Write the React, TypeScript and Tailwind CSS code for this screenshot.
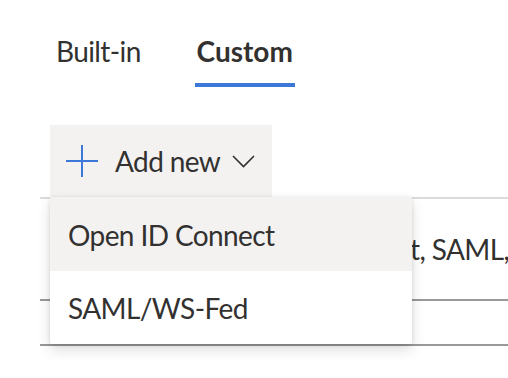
import React from "react";

const PlusIcon = () => (
  <svg width="32" height="32" viewBox="0 0 32 32" className="shrink-0">
    <path d="M0 16H32M16 0V32" stroke="#3b78d8" strokeWidth="2" fill="none" />
  </svg>
);

const ChevronIcon = () => (
  <svg width="23" height="13" viewBox="0 0 23 13" className="shrink-0">
    <polyline
      points="1,1 11.5,11.5 22,1"
      stroke="#323130"
      strokeWidth="1.6"
      fill="none"
    />
  </svg>
);

const menuItems = ["Open ID Connect", "SAML/WS-Fed"];

const App: React.FC = () => {
  return (
    <div
      className="w-[508px] h-[378px] bg-white overflow-hidden flex flex-col text-[#323130] text-[28px] leading-[40px] tracking-[-0.6px]"
      style={{ fontFamily: 'Lato, "Open Sans", sans-serif' }}
    >
      {/* tabs */}
      <div className="flex pt-[31px] pl-[54px] gap-[52px]">
        <div className="flex flex-col">
          <span className="px-[2px]">Built-in</span>
          <div className="mt-[12px] h-[4px]" />
        </div>
        <div className="flex flex-col w-[100px]">
          <span className="text-center font-bold tracking-normal">Custom</span>
          <div className="mt-[12px] h-[4px] bg-[#3b78d8]" />
        </div>
      </div>

      {/* add new */}
      <div className="pl-[50px] mt-[38px]">
        <div className="relative w-[222px]">
          <button className="w-full h-[72px] bg-[#f3f2f1] flex items-center pl-[16px] pr-[17px]">
            <PlusIcon />
            <span className="flex-1 text-left ml-[17px]">Add new</span>
            <ChevronIcon />
          </button>

          <div className="absolute left-0 top-full z-10 w-[362px] bg-white rounded-[2px] shadow-[0_6px_14px_rgba(0,0,0,0.13),0_1px_4px_rgba(0,0,0,0.11)]">
            {menuItems.map((item, i) => (
              <div
                key={item}
                className={
                  i === 0
                    ? "h-[74px] flex items-center pl-[18px] pt-[2px] bg-[#f3f2f1]"
                    : "h-[73px] flex items-center pl-[18px]"
                }
              >
                {item}
              </div>
            ))}
          </div>
        </div>
      </div>

      {/* list behind */}
      <div className="flex">
        <div className="w-[10px] h-[64px] mt-[1px] bg-[#edebe9]" />
        <div className="ml-[40px] flex-1 flex flex-col">
          <div className="h-[2px] bg-[#dcdbda]" />
          <div className="h-[100px] flex items-center pl-[173px] whitespace-nowrap">
            Open ID Connect, SAML, WS-Fed
          </div>
          <div className="h-[2px] bg-[#9b9997]" />
          <div className="h-[43px]" />
          <div className="h-[2px] bg-[#9b9997]" />
        </div>
      </div>
    </div>
  );
};

export default App;
